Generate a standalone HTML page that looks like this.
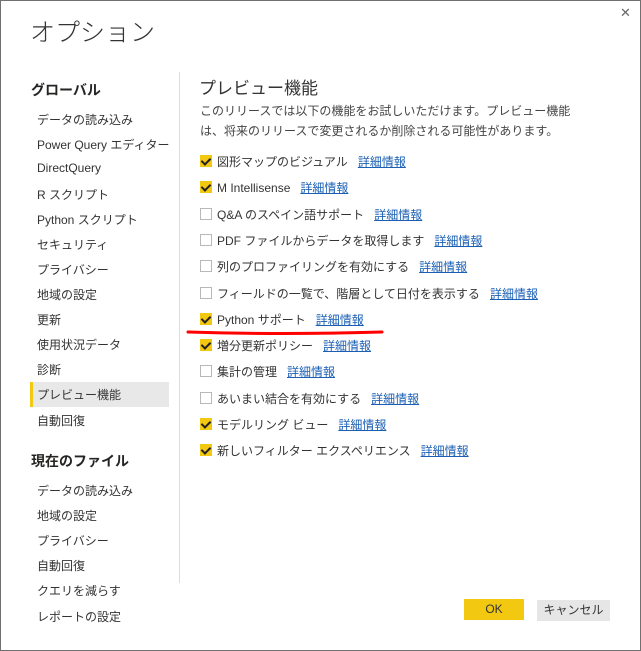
<!DOCTYPE html>
<html><head><meta charset="utf-8"><style>
*{margin:0;padding:0;box-sizing:border-box}
body{width:641px;height:651px;background:#fff;font-family:"Liberation Sans","Noto Sans CJK JP",sans-serif;color:#333;position:relative;overflow:hidden}
.frame{position:absolute;left:0;top:0;width:641px;height:651px;border:1px solid #707070}
.a{position:absolute;white-space:nowrap}
.t{font-size:25px;color:#333;left:30px;top:13px;font-weight:300}
.h{font-size:14px;font-weight:bold;color:#252423;left:31px}
.n{font-size:12px;left:37px;color:#333}
.sel{position:absolute;left:30px;top:382px;width:139px;height:25px;background:#e8e8e8;border-left:3px solid #f2c811}
.div{position:absolute;left:179px;top:72px;width:1px;height:511px;background:#ddd}
.cb{position:absolute;left:200px;width:12px;height:12px}
.cb.on{background:#f2c811}
.cb.off{border:1px solid #b8b8b8;background:#fff}
.cb.on:after{content:"";position:absolute;left:3px;top:1px;width:4px;height:7px;border:solid #222;border-width:0 2px 2px 0;transform:rotate(45deg)}
.r{font-size:12px;left:217px;color:#333}
.r a{color:#1a5fb4;text-decoration:underline;margin-left:10px}
.btn{position:absolute;font-size:12px;text-align:center;line-height:21px;height:21px}
</style></head><body>
<div class="frame"></div>
<div class="a" style="left:620px;top:5px;font-size:13px;color:#666">✕</div>
<div class="a t">オプション</div>
<div class="a h" style="top:80px">グローバル</div>
<div class="sel"></div>
<div class="a n" style="top:111px">データの読み込み</div>
<div class="a n" style="top:136px">Power Query エディター</div>
<div class="a n" style="top:161px">DirectQuery</div>
<div class="a n" style="top:186px">R スクリプト</div>
<div class="a n" style="top:211px">Python スクリプト</div>
<div class="a n" style="top:236px">セキュリティ</div>
<div class="a n" style="top:261px">プライバシー</div>
<div class="a n" style="top:286px">地域の設定</div>
<div class="a n" style="top:311px">更新</div>
<div class="a n" style="top:336px">使用状況データ</div>
<div class="a n" style="top:361px">診断</div>
<div class="a n" style="top:386px">プレビュー機能</div>
<div class="a n" style="top:412px">自動回復</div>
<div class="a h" style="top:451px">現在のファイル</div>
<div class="a n" style="top:482px">データの読み込み</div>
<div class="a n" style="top:507px">地域の設定</div>
<div class="a n" style="top:532px">プライバシー</div>
<div class="a n" style="top:557px">自動回復</div>
<div class="a n" style="top:582px">クエリを減らす</div>
<div class="a n" style="top:608px">レポートの設定</div>
<div class="div"></div>
<div class="a" style="left:199px;top:74px;font-size:17px;color:#333">プレビュー機能</div>
<div class="a" style="left:200px;top:101px;font-size:12px;line-height:20px;color:#444">このリリースでは以下の機能をお試しいただけます。プレビュー機能<br>は、将来のリリースで変更されるか削除される可能性があります。</div>

<div class="cb on" style="top:155px"></div><div class="a r" style="top:153px">図形マップのビジュアル<a>詳細情報</a></div>
<div class="cb on" style="top:181px"></div><div class="a r" style="top:179px">M Intellisense<a>詳細情報</a></div>
<div class="cb off" style="top:208px"></div><div class="a r" style="top:206px">Q&amp;A のスペイン語サポート<a>詳細情報</a></div>
<div class="cb off" style="top:234px"></div><div class="a r" style="top:232px">PDF ファイルからデータを取得します<a>詳細情報</a></div>
<div class="cb off" style="top:260px"></div><div class="a r" style="top:258px">列のプロファイリングを有効にする<a>詳細情報</a></div>
<div class="cb off" style="top:287px"></div><div class="a r" style="top:285px">フィールドの一覧で、階層として日付を表示する<a>詳細情報</a></div>
<div class="cb on" style="top:313px"></div><div class="a r" style="top:311px">Python サポート<a>詳細情報</a></div>
<div class="cb on" style="top:339px"></div><div class="a r" style="top:337px">増分更新ポリシー<a>詳細情報</a></div>
<div class="cb off" style="top:365px"></div><div class="a r" style="top:363px">集計の管理<a>詳細情報</a></div>
<div class="cb off" style="top:392px"></div><div class="a r" style="top:390px">あいまい結合を有効にする<a>詳細情報</a></div>
<div class="cb on" style="top:418px"></div><div class="a r" style="top:416px">モデルリング ビュー<a>詳細情報</a></div>
<div class="cb on" style="top:444px"></div><div class="a r" style="top:442px">新しいフィルター エクスペリエンス<a>詳細情報</a></div>

<svg class="a" style="left:180px;top:326px" width="210" height="14"><path d="M8 6 Q100 9 202 6" stroke="#f00" stroke-width="3" fill="none" stroke-linecap="round"/></svg>

<div class="btn" style="left:464px;top:599px;width:60px;background:#f2c811;color:#333">OK</div>
<div class="btn" style="left:537px;top:600px;width:73px;background:#e6e6e6;color:#333">キャンセル</div>
</body></html>
